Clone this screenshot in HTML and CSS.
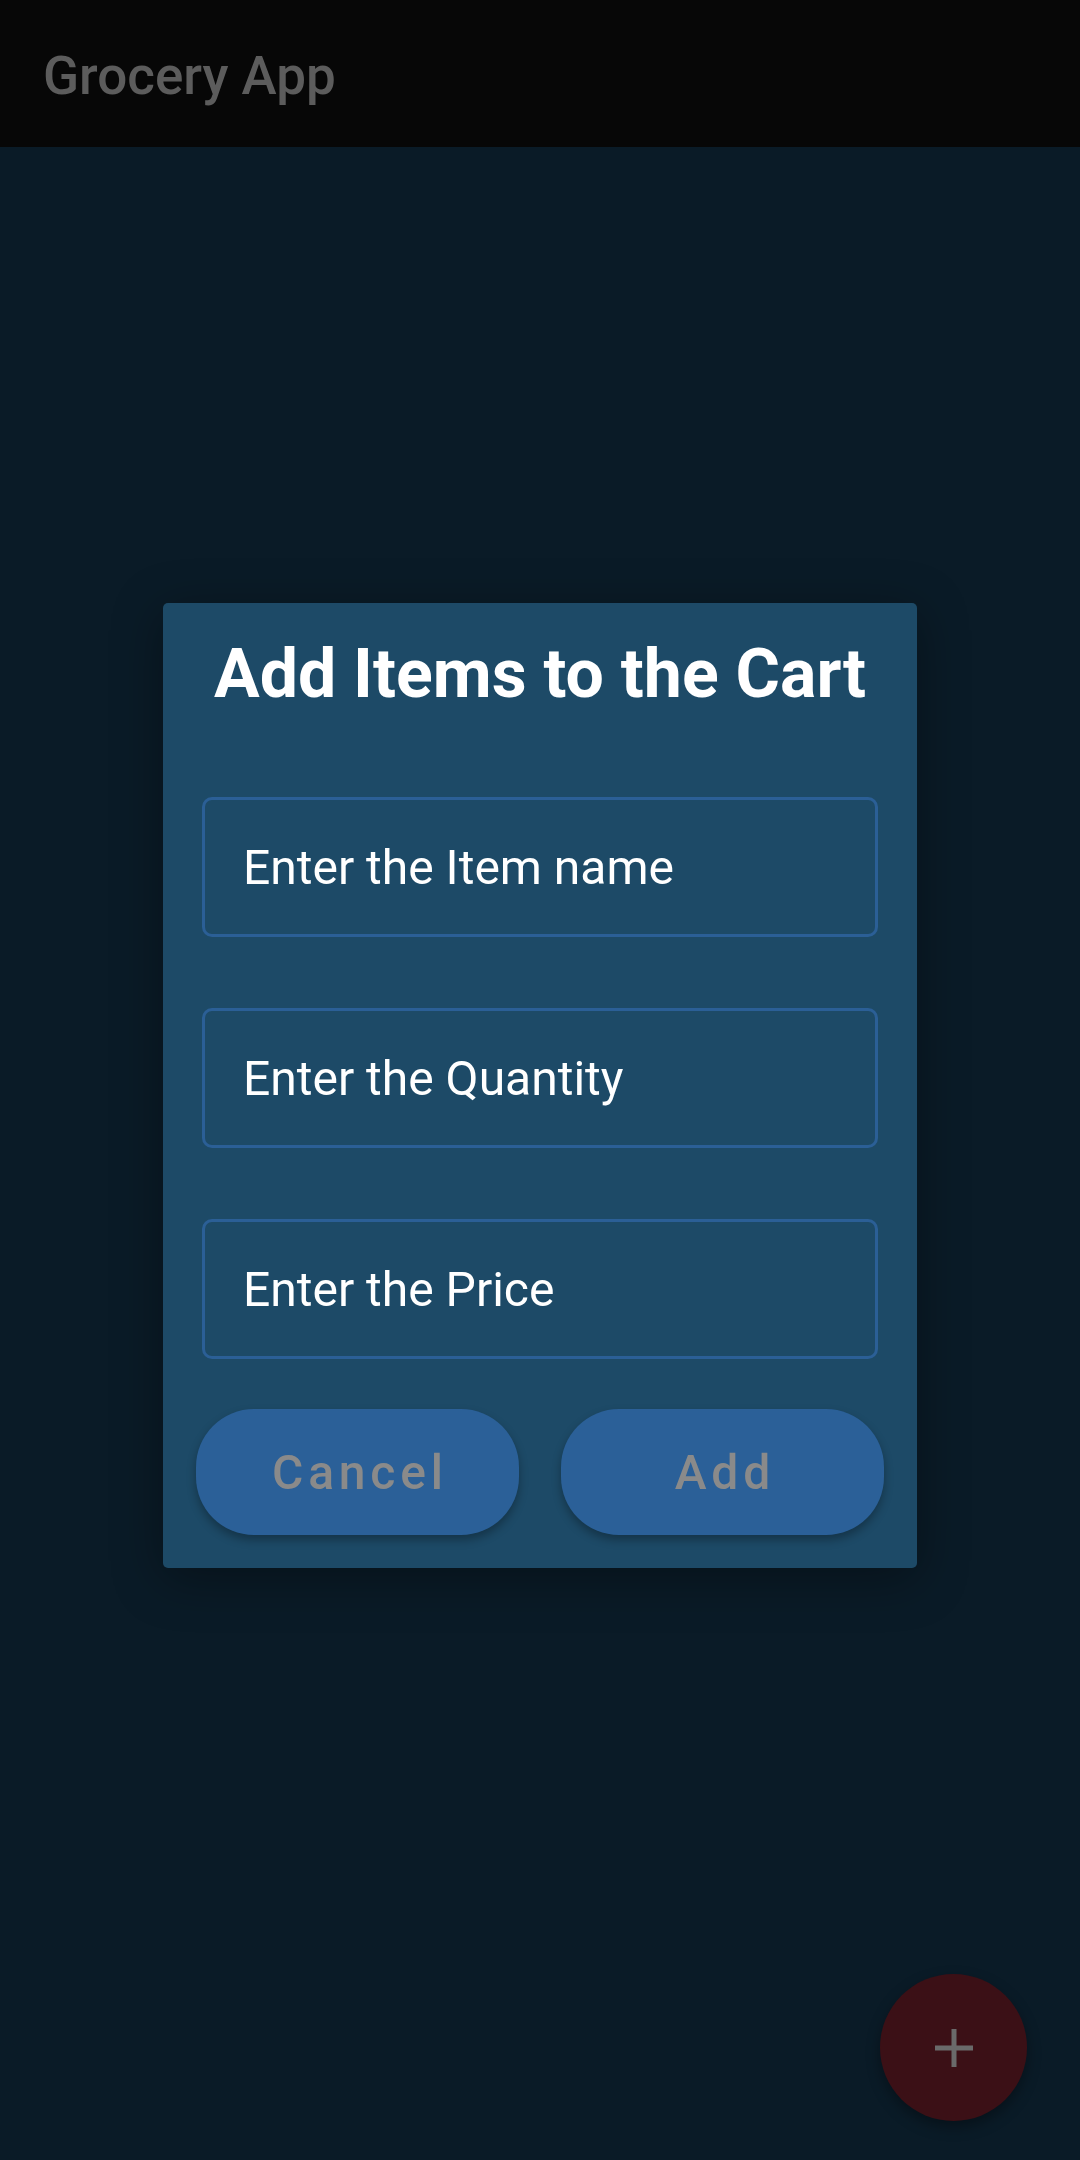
FILE: index.html
```html
<!DOCTYPE html>
<html lang="en">
<head>
<meta charset="utf-8">
<title>Grocery App</title>
<link rel="stylesheet" href="styles.css">
</head>
<body>
<header class="app-bar">
  <h1 class="app-title">Grocery App</h1>
</header>
<main class="content"></main>

<button class="fab" aria-label="Add item">
  <svg class="fab-icon" viewBox="0 0 38 38" width="38" height="38" aria-hidden="true">
    <rect x="16.5" y="0" width="5" height="38" fill="#6a6a6a"/>
    <rect x="0" y="16.5" width="38" height="5" fill="#6a6a6a"/>
  </svg>
</button>

<div class="overlay">
  <section class="dialog">
    <h2 class="dialog-title">Add Items to the Cart</h2>
    <div class="fields">
      <input class="field" type="text" placeholder="Enter the Item name">
      <input class="field" type="text" placeholder="Enter the Quantity">
      <input class="field" type="text" placeholder="Enter the Price">
    </div>
    <div class="actions">
      <button class="btn">Cancel</button>
      <button class="btn">Add</button>
    </div>
  </section>
</div>
</body>
</html>
```
FILE: styles.css
```css
* { box-sizing: border-box; }

html, body {
  margin: 0;
  padding: 0;
  height: 100%;
}

body {
  background: #0a1b27;
  font-family: Roboto, "Noto Sans", "Liberation Sans", sans-serif;
  display: flex;
  flex-direction: column;
  min-height: 2160px;
}

.app-bar {
  height: 147px;
  background: #070707;
  display: flex;
  align-items: center;
  padding: 7px 0 0 43px;
  flex: none;
}

.app-title {
  margin: 0;
  font-size: 53px;
  font-weight: 500;
  color: #5c5c5c;
  line-height: 1.2;
}

.content { flex: 1; }

.fab {
  position: fixed;
  left: 880px;
  top: 1974px;
  width: 147px;
  height: 147px;
  border-radius: 50%;
  border: none;
  background: #3b1016;
  box-shadow: 0 6px 14px rgba(0, 0, 0, 0.35);
  display: flex;
  align-items: center;
  justify-content: center;
  padding: 0;
}

.fab-icon { display: block; }

.overlay {
  position: fixed;
  inset: 0;
  display: flex;
  justify-content: center;
  align-items: flex-start;
  padding-top: 603px;
}

.dialog {
  width: 754px;
  background: #1d4a67;
  border-radius: 5px;
  padding: 33px 39px 33px;
  box-shadow: 0 10px 50px rgba(0, 0, 0, 0.35);
}

.dialog-title {
  margin: 0;
  text-align: center;
  font-size: 68px;
  font-weight: 700;
  line-height: 77px;
  color: #ffffff;
}

.fields {
  margin-top: 84px;
  display: flex;
  flex-direction: column;
  gap: 71px;
}

.field {
  display: block;
  width: 100%;
  height: 140px;
  border: 3px solid #2b5f96;
  border-radius: 10px;
  background: transparent;
  padding: 0 0 0 38px;
  font-family: Roboto, "Noto Sans", "Liberation Sans", sans-serif;
  font-size: 48px;
  color: #ffffff;
  outline: none;
}

.field::placeholder {
  color: #ffffff;
  opacity: 1;
}

.actions {
  margin: 50px -6px 0;
  display: flex;
  gap: 42px;
}

.btn {
  flex: 1;
  height: 126px;
  border: none;
  border-radius: 58px;
  background: #2b6098;
  color: #8a8a8a;
  font-family: Roboto, "Noto Sans", "Liberation Sans", sans-serif;
  font-size: 48px;
  font-weight: 500;
  letter-spacing: 0.1em;
  padding: 0 0 0 0.1em;
  box-shadow: 0 5px 10px rgba(0, 0, 0, 0.3);
}
```
